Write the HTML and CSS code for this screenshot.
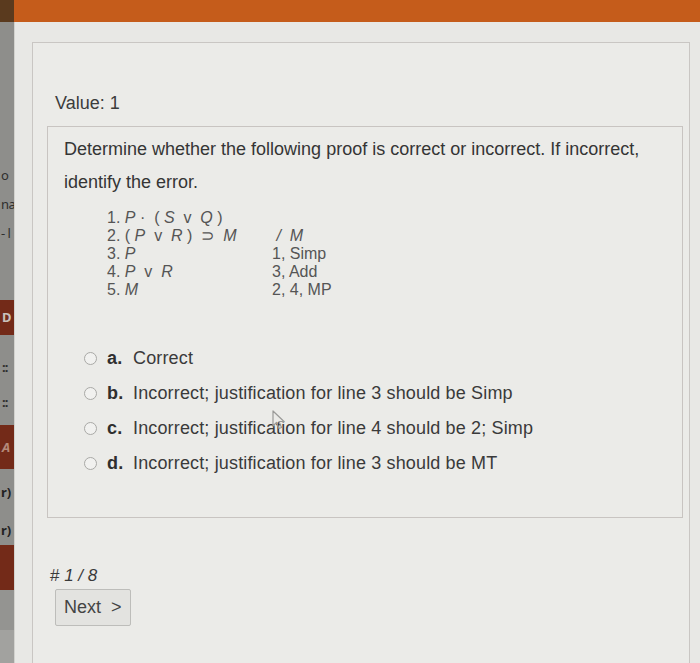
FILE: index.html
```html
<!DOCTYPE html>
<html>
<head>
<meta charset="utf-8">
<link rel="stylesheet" href="styles.css">
</head>
<body>
<div class="topbar"><div class="topbar-side"></div><div class="topbar-main"></div></div>
<div class="layout">
  <aside class="sidebar">
    <div class="sb-item sb-gray sb-h1"></div>
    <div class="sb-item sb-gray sb-text">o</div>
    <div class="sb-item sb-gray sb-text">na</div>
    <div class="sb-item sb-gray sb-text">- l</div>
    <div class="sb-item sb-gray sb-h2"></div>
    <div class="sb-item sb-red sb-letter">D</div>
    <div class="sb-item sb-gray sb-h3"></div>
    <div class="sb-item sb-gray sb-dots">::</div>
    <div class="sb-item sb-gray sb-dots">::</div>
    <div class="sb-item sb-gray sb-h3b"></div>
    <div class="sb-item sb-red sb-letter sb-dim">A</div>
    <div class="sb-item sb-gray sb-bold">r)</div>
    <div class="sb-item sb-gray sb-bold">r)</div>
    <div class="sb-item sb-red sb-h4"></div>
    <div class="sb-item sb-gray sb-h5"></div>
    <div class="sb-item sb-gray sb-h6"></div>
  </aside>
  <main class="content">
    <section class="card">
      <div class="value">Value: 1</div>
      <div class="question">
        <p class="prompt">Determine whether the following proof is correct or incorrect. If incorrect, identify the error.</p>
        <div class="proof">
          <div class="proof-left">
            <div>1. <i>P</i> · &nbsp;( <i>S</i> &nbsp;v &nbsp;<i>Q</i> )</div>
            <div>2. ( <i>P</i> &nbsp;v &nbsp;<i>R</i> ) &nbsp;⊃ &nbsp;<i>M</i></div>
            <div>3. <i>P</i></div>
            <div>4. <i>P</i> &nbsp;v &nbsp;<i>R</i></div>
            <div>5. <i>M</i></div>
          </div>
          <div class="proof-right">
            <div>&nbsp;<i>/ &nbsp;M</i></div>
            <div>1, Simp</div>
            <div>3, Add</div>
            <div>2, 4, MP</div>
          </div>
        </div>
        <ul class="options">
          <li class="option"><span class="radio"></span><b>a.</b><span>Correct</span></li>
          <li class="option"><span class="radio"></span><b>b.</b><span>Incorrect; justification for line 3 should be Simp</span></li>
          <li class="option"><span class="radio"></span><b>c.</b><span>Incorrect; justification for line 4 should be 2; Simp</span></li>
          <li class="option"><span class="radio"></span><b>d.</b><span>Incorrect; justification for line 3 should be MT</span></li>
        </ul>
        <svg class="cursor" width="14" height="20" viewBox="0 0 14 20"><path d="M1 1 L1 16 L4.5 12.5 L7 18.5 L9.5 17.5 L7 11.5 L12 11.5 Z" fill="none" stroke="#9a9a98" stroke-width="1.2" stroke-linejoin="round"/></svg>
      </div>
      <div class="pager"># <i>1 / 8</i></div>
      <button class="next">Next &nbsp;&gt;</button>
    </section>
  </main>
</div>
</body>
</html>
```

FILE: styles.css
```css
html, body {
  margin: 0;
  padding: 0;
}
body {
  width: 700px;
  height: 663px;
  overflow: hidden;
  background: #e8e8e5;
  font-family: "Liberation Sans", Arial, sans-serif;
  color: #3a3a3a;
}
.topbar {
  display: flex;
  height: 22px;
}
.topbar-side {
  width: 14px;
  background: #5a3a1e;
}
.topbar-main {
  flex: 1;
  background: #c55c1b;
}
.layout {
  display: flex;
  height: 641px;
}
.sidebar {
  width: 14px;
  display: flex;
  flex-direction: column;
  overflow: hidden;
  background: #8c8c89;
  border-right: 1px solid #d2d2ce;
}
.sb-item {
  font-family: "Noto Sans", sans-serif;
  font-size: 13px;
  color: #2e2e2e;
  white-space: nowrap;
  overflow: hidden;
  flex: none;
}
.sb-gray { background: #8e8e8b; }
.sb-red { background: #732a18; }
.sb-h1 { height: 139px; }
.sb-text {
  height: 29px;
  line-height: 29px;
  letter-spacing: -0.5px;
  padding-left: 1px;
}
.sb-h2 { height: 52px; }
.sb-letter {
  height: 35px;
  line-height: 35px;
  color: #c9c0bb;
  font-weight: bold;
  padding-left: 2px;
}
.sb-h3 { height: 15px; }
.sb-dots {
  height: 35px;
  line-height: 35px;
  color: #2d2d2d;
  font-weight: bold;
  letter-spacing: -1px;
  padding-left: 2px;
}
.sb-h3b { height: 5px; }
.sb-dim {
  color: #b58a7a;
  font-style: italic;
  height: 44px;
  line-height: 44px;
}
.sb-bold {
  height: 30px;
  line-height: 30px;
  padding-top: 8px;
  font-weight: bold;
  color: #222;
  padding-left: 1px;
}
.sb-h4 { height: 45px; }
.sb-h5 { height: 40px; background: #949491; }
.sb-h6 { height: 60px; background: #a2a29f; }
.content {
  flex: 1;
  padding: 20px 10px 0 17px;
}
.card {
  height: 100%;
  box-sizing: border-box;
  border: 1px solid #c9c6c3;
  border-bottom: none;
  padding: 0 6px 0 14px;
  background: #ebebe8;
}
.value {
  font-size: 18px;
  margin-top: 44px;
  padding-left: 8px;
  line-height: 32px;
  color: #3c3c3c;
}
.question {
  position: relative;
  margin-top: 7px;
  border: 1px solid #c8c4c1;
  padding: 6px 20px 35px 16px;
  height: 392px;
  box-sizing: border-box;
}
.prompt {
  margin: 0;
  font-size: 18px;
  line-height: 33px;
  color: #353535;
}
.proof {
  display: grid;
  grid-template-columns: 165px auto;
  margin: 10px 0 0 43px;
  font-size: 16px;
  line-height: 18px;
  color: #555;
}
.proof-right {
  padding-top: 18px;
}
.options {
  list-style: none;
  margin: 42px 0 0 0;
  padding: 0;
}
.option {
  display: flex;
  align-items: center;
  height: 35px;
  font-size: 18px;
  letter-spacing: 0.15px;
  color: #3a3a3a;
}
.radio {
  flex: none;
  width: 11px;
  height: 11px;
  border: 1px solid #a9a9a6;
  border-radius: 50%;
  background: #f1f1ef;
  margin-left: 20px;
  margin-right: 10px;
}
.option b {
  flex: none;
  width: 26px;
  color: #2f2f2f;
}
.cursor {
  position: absolute;
  left: 224px;
  top: 283px;
}
.pager {
  margin-top: 48px;
  font-size: 17px;
  line-height: 20px;
  padding-left: 3px;
  color: #3a3a3a;
}
.next {
  margin-top: 3px;
  margin-left: 8px;
  width: 76px;
  height: 37px;
  font-family: "Liberation Sans", Arial, sans-serif;
  font-size: 18px;
  color: #444;
  background: #e3e3e0;
  border: 1px solid #bdbdba;
  border-radius: 2px;
  text-align: left;
  padding: 0 0 0 8px;
}
```
